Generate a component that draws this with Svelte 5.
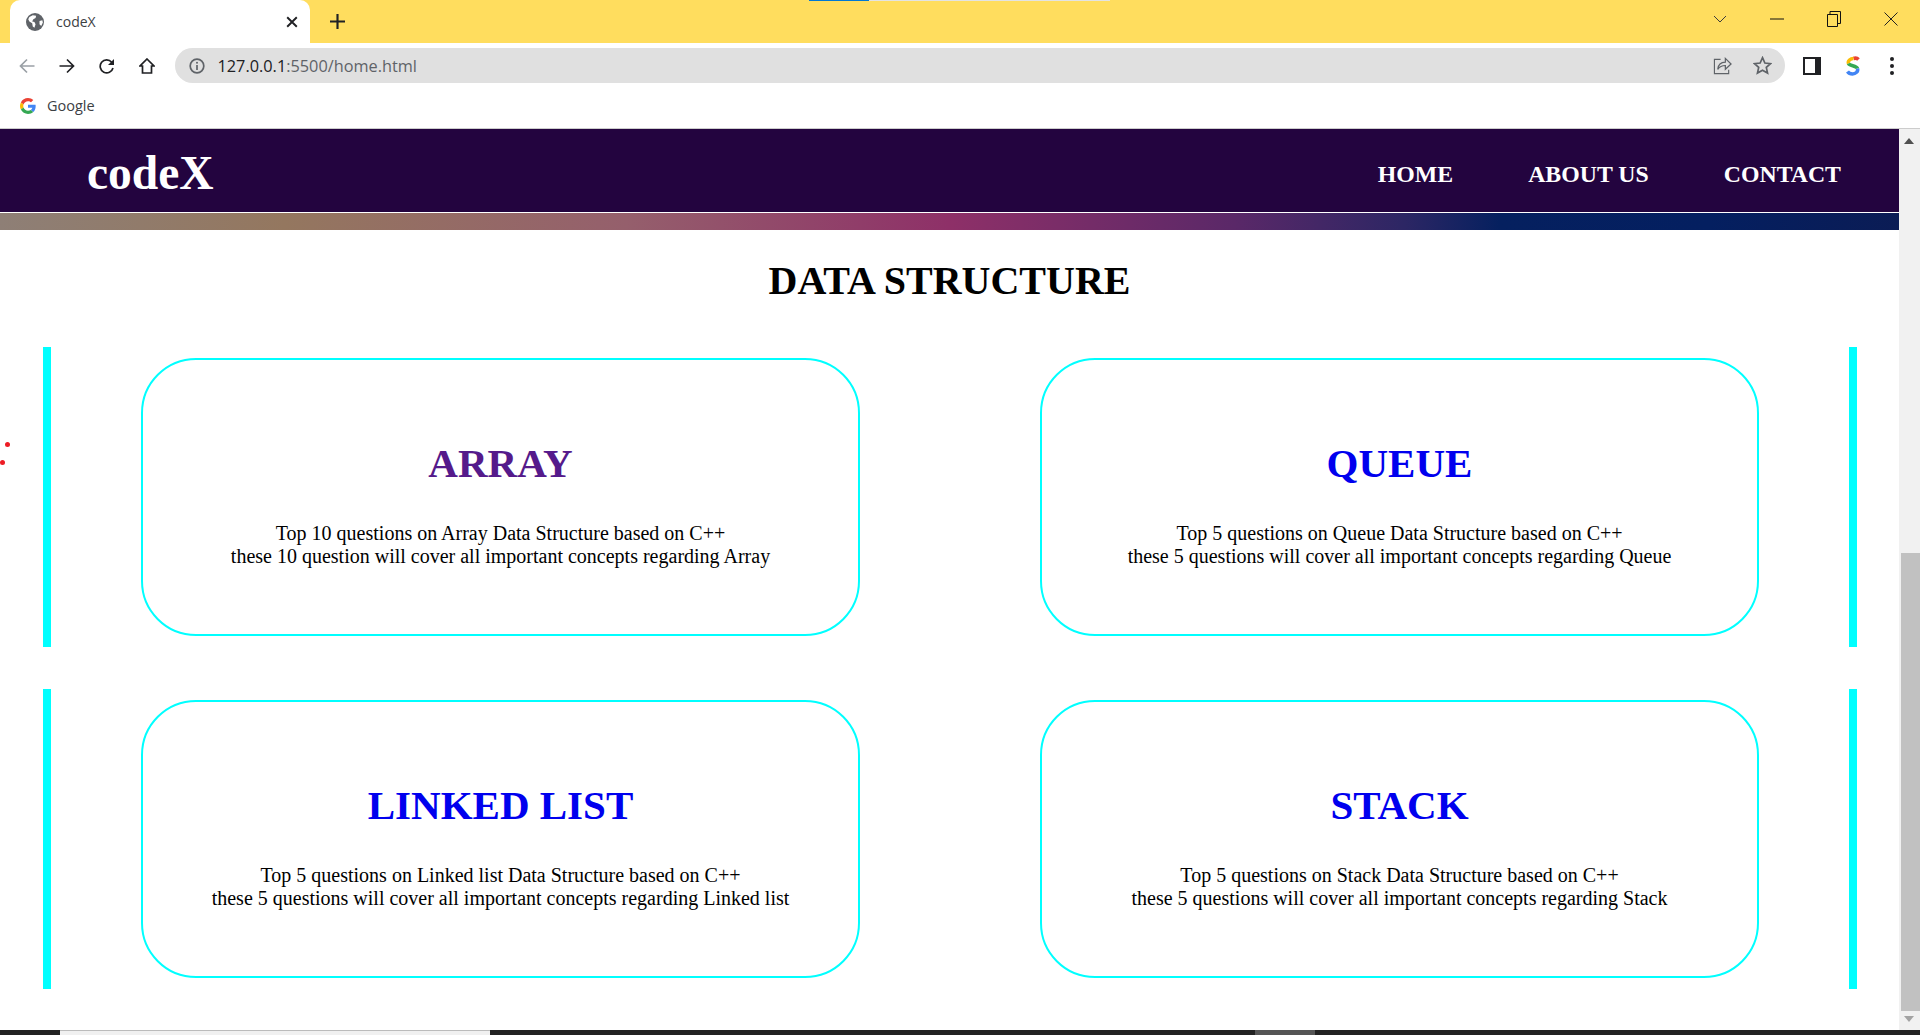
<script>
  // cards shown on the home page
  const cards = [
    { title: 'ARRAY', visited: true, line1: 'Top 10 questions on Array Data Structure based on C++', line2: 'these 10 question will cover all important concepts regarding Array' },
    { title: 'QUEUE', line1: 'Top 5 questions on Queue Data Structure based on C++', line2: 'these 5 questions will cover all important concepts regarding Queue' },
    { title: 'LINKED LIST', line1: 'Top 5 questions on Linked list Data Structure based on C++', line2: 'these 5 questions will cover all important concepts regarding Linked list' },
    { title: 'STACK', line1: 'Top 5 questions on Stack Data Structure based on C++', line2: 'these 5 questions will cover all important concepts regarding Stack' }
  ];
  const rows = [cards.slice(0, 2), cards.slice(2, 4)];
</script>

<div class="screen">
  <div class="tabstrip">
    <div class="progress"><span class="progress__done"></span><span class="progress__rest"></span></div>
    <div class="tab">
      <svg class="tab__globe" viewBox="0 0 16 16" width="18" height="18">
        <circle cx="8" cy="8" r="8" fill="#5f6368" />
        <path d="M3 3.500l3 -1.500 3 .5 -.5 2 -2 1 -1 2 2 .5 1 2 -1 3 -1.500 -1 -.5 -3 -2.500 -1.500 -1 -2z M12 7l2.500 -.5 .5 2 -1.500 3 -1.500 -1.500z" fill="#fff" />
      </svg>
      <span class="tab__title">codeX</span>
      <svg class="tab__close" viewBox="0 0 10 10" width="12" height="12">
        <path d="M1 1l8 8M9 1l-8 8" stroke="#202124" stroke-width="1.600" fill="none" />
      </svg>
    </div>
    <svg class="newtab" viewBox="0 0 14 14" width="15" height="15">
      <path d="M7 0v14M0 7h14" stroke="#202124" stroke-width="2" fill="none" />
    </svg>
    <div class="wincontrols">
      <svg viewBox="0 0 14 8" width="14" height="8"><path d="M1 1l6 6 6 -6" stroke="#3c3c3c" fill="none" /></svg>
      <svg viewBox="0 0 14 2" width="14" height="2"><path d="M0 1h14" stroke="#111" fill="none" /></svg>
      <svg viewBox="0 0 14 16" width="14" height="16"><path d="M.5 3.500h10v12h-10zM3 3.500v-3h10.500v12h-3" stroke="#111" fill="none" /></svg>
      <svg viewBox="0 0 14 14" width="14" height="14"><path d="M.5 .5l13 13M13.500 .5l-13 13" stroke="#222" fill="none" /></svg>
    </div>
  </div>

  <div class="toolbar">
    <svg class="nav-icon" viewBox="0 0 16 16" width="16" height="16"><path d="M15.500 8h-14M8 1.500l-6.500 6.500 6.500 6.500" stroke="#9aa0a6" stroke-width="1.700" fill="none" /></svg>
    <svg class="nav-icon" viewBox="0 0 16 16" width="16" height="16"><path d="M.5 8h14M8 1.500l6.500 6.500 -6.500 6.500" stroke="#202124" stroke-width="1.700" fill="none" /></svg>
    <svg class="nav-icon" viewBox="0 0 16 16" width="16" height="16"><path d="M14 10a6.500 6.500 0 1 1 -1.300 -5.800" stroke="#202124" stroke-width="1.700" fill="none" /><path d="M15 1v6h-6z" fill="#202124" /></svg>
    <svg class="nav-icon" viewBox="0 0 16 16" width="16" height="16"><path d="M8 1l7 7h-2.500v7h-9v-7h-2.500z" stroke="#202124" stroke-width="1.700" fill="none" /></svg>
    <div class="omnibox">
      <svg viewBox="0 0 16 16" width="16" height="16">
        <circle cx="8" cy="8" r="6.800" stroke="#5f6368" stroke-width="1.700" fill="none" />
        <path d="M8 7v5" stroke="#5f6368" stroke-width="1.700" /><circle cx="8" cy="4.800" r="1" fill="#5f6368" />
      </svg>
      <span class="omnibox__url"><span class="omnibox__host">127.0.0.1</span>:5500/home.html</span>
      <svg class="omnibox__share" viewBox="0 0 20 20" width="19" height="19">
        <path d="M8 3.500h-6.500v15h15v-4" stroke="#5f6368" stroke-width="1.200" fill="none" />
        <path d="M5 14c.5 -5 4 -7.500 8 -7.500v-4l6 6 -6 5.500v-4c-3 0 -6 1 -8 4z" stroke="#5f6368" stroke-width="1.300" fill="none" />
      </svg>
      <svg class="omnibox__star" viewBox="0 0 20 20" width="19" height="19">
        <path d="M10 1.800l2.500 5.600 6 .6 -4.500 4 1.300 6 -5.300 -3.100 -5.300 3.100 1.300 -6 -4.500 -4 6 -.6z" stroke="#5f6368" stroke-width="1.800" fill="none" />
      </svg>
    </div>
    <svg class="side-icon" viewBox="0 0 18 18" width="18" height="18">
      <rect width="18" height="18" fill="#202124" /><rect x="2" y="2" width="10" height="14" fill="#fff" />
    </svg>
    <svg class="s-icon" viewBox="0 0 16 20" width="16" height="20">
      <path d="M13.500 3.500a4 3 0 0 0 -5 -1" stroke="#ea4335" stroke-width="3.500" fill="none" />
      <path d="M8.500 2.500c-3 0 -6 2.500 -5 5" stroke="#fbbc04" stroke-width="3.500" fill="none" />
      <path d="M3.500 7.500c1 2.500 8 2 9 5" stroke="#34a853" stroke-width="3.500" fill="none" />
      <path d="M12.500 12.500c1 3 -2 5.500 -5 5.500 -2 0 -4 -1 -5 -2.500" stroke="#4285f4" stroke-width="3.500" fill="none" />
    </svg>
    <svg class="menu-icon" viewBox="0 0 4 18" width="4" height="18">
      <circle cx="2" cy="2" r="2" fill="#202124" /><circle cx="2" cy="9" r="2" fill="#202124" /><circle cx="2" cy="16" r="2" fill="#202124" />
    </svg>
  </div>

  <div class="bookmarks">
    <svg viewBox="0 0 48 48" width="16" height="16">
      <path fill="#ea4335" d="M24 9.500c3.900 0 6.900 1.600 9.100 3.600l6.800 -6.800C35.900 2.500 30.500 0 24 0 14.600 0 6.500 5.400 2.600 13.200l7.900 6.100C12.400 13.700 17.700 9.500 24 9.500z" />
      <path fill="#4285f4" d="M47 24.500c0 -1.600 -.1 -3.100 -.4 -4.500H24v9h13c-.6 3 -2.300 5.500 -4.800 7.200l7.700 6C44.400 38.100 47 31.900 47 24.500z" />
      <path fill="#fbbc05" d="M10.500 28.700C10 27.200 9.800 25.600 9.800 24s.2 -3.200 .7 -4.700l-7.900 -6.100C.9 16.400 0 20.100 0 24s.9 7.600 2.600 10.800z" />
      <path fill="#34a853" d="M24 48c6.500 0 11.900 -2.100 15.900 -5.800l-7.700 -6c-2.200 1.500 -4.900 2.300 -8.200 2.300 -6.300 0 -11.600 -4.200 -13.500 -9.800l-7.900 6.100C6.500 42.600 14.600 48 24 48z" />
    </svg>
    <span>Google</span>
  </div>

  <div class="viewport">
    <div class="page">
      <header class="topbar">
        <span class="logo">codeX</span>
        <nav class="topbar__nav">
          <span>HOME</span>
          <span>ABOUT US</span>
          <span>CONTACT</span>
        </nav>
      </header>
      <div class="strip"></div>

      <h1 class="heading">DATA STRUCTURE</h1>

      <main class="rows">
        {#each rows as row}
          <section class="row">
            {#each row as card}
              <article class="card">
                <h2 class="card__title" class:visited={card.visited}>{card.title}</h2>
                <p class="card__copy">{card.line1}<br />{card.line2}</p>
              </article>
            {/each}
          </section>
        {/each}
      </main>

      <span class="dot dot--one"></span>
      <span class="dot dot--two"></span>
    </div>

    <div class="scrollbar">
      <span class="scrollbar__up"></span>
      <span class="scrollbar__thumb"></span>
      <span class="scrollbar__down"></span>
    </div>
  </div>

  <div class="taskbar">
    <span class="taskbar__window"></span>
    <span class="taskbar__active"></span>
  </div>
</div>

<style>
  :global(body) {
    margin: 0;
    background: #fff;
    overflow: hidden;
  }

  .screen {
    display: flex;
    flex-direction: column;
    height: 1035px;
    overflow: hidden;
  }

  .tabstrip {
    align-items: flex-end;
    background: #ffdd5e;
    display: flex;
    flex: none;
    height: 43px;
    position: relative;
  }

  .progress {
    display: flex;
    left: 809px;
    position: absolute;
    top: 0;
  }

  .progress__done {
    background: #0078d4;
    height: 1px;
    width: 60px;
  }

  .progress__rest {
    background: #e3e3e3;
    height: 1px;
    width: 241px;
  }

  .tab {
    align-items: center;
    background: #fff;
    border-radius: 10px 10px 0 0;
    box-sizing: border-box;
    display: flex;
    height: 43px;
    margin-left: 10px;
    padding: 0 12px 0 16px;
    width: 300px;
  }

  .tab__title {
    color: #3c4043;
    flex: 1;
    font: 14px "Open Sans", sans-serif;
    margin-left: 12px;
  }

  .newtab {
    margin: 0 0 14px 20px;
  }

  .wincontrols {
    align-items: center;
    align-self: flex-start;
    display: flex;
    gap: 43px;
    height: 37px;
    margin-left: auto;
    padding-right: 22px;
  }

  .toolbar {
    align-items: center;
    background: #fff;
    display: flex;
    flex: none;
    gap: 24px;
    height: 45px;
    padding-left: 19px;
  }

  .omnibox {
    align-items: center;
    background: #e0e0e0;
    border-radius: 18px;
    display: flex;
    height: 35px;
    margin-left: -4.5px;
    padding: 0 13px 0 14px;
    width: 1583px;
  }

  .omnibox__url {
    color: #5f6368;
    flex: 1;
    font: 16.3px "Open Sans", sans-serif;
    margin-left: 13px;
  }

  .omnibox__host {
    color: #202124;
  }

  .omnibox__star {
    margin-left: 21px;
  }

  .side-icon {
    margin-left: -5.5px;
  }

  .s-icon {
    margin-left: 0;
  }

  .menu-icon {
    margin-left: 5px;
  }

  .bookmarks {
    align-items: center;
    background: #fff;
    border-bottom: 1px solid #ccc;
    box-sizing: border-box;
    color: #3c4043;
    display: flex;
    flex: none;
    font: 14.5px "Open Sans", sans-serif;
    gap: 11px;
    height: 41px;
    padding: 0 0 5px 20px;
  }

  .viewport {
    display: flex;
    flex: 1;
    min-height: 0;
  }

  .page {
    color: #000;
    flex: 1;
    font-family: "Liberation Serif", serif;
    min-width: 0;
    position: relative;
  }

  .topbar {
    align-items: center;
    background: #23043f;
    color: #fff;
    display: flex;
    font-weight: bold;
    height: 83px;
    justify-content: space-between;
    padding: 0 58px 0 87px;
  }

  .logo {
    font-size: 47.5px;
    padding-top: 4px;
  }

  .topbar__nav {
    display: flex;
    font-size: 23.8px;
    gap: 75px;
    padding-top: 8px;
  }

  .strip {
    background: linear-gradient(90deg, #8e7f76 0%, #94775f 15%, #955f6c 33%, #8e3068 50%, #5a2868 65%, #2c2664 74%, #05205f 79%, #041f60 90%, #0b1c55 100%);
    border-top: 1px solid #fff;
    height: 17px;
  }

  .heading {
    font-size: 40px;
    font-weight: bold;
    margin: 27px 0 43px;
    text-align: center;
  }

  .rows {
    display: flex;
    flex-direction: column;
    gap: 42px;
    padding: 0 42px 0 43px;
  }

  .row {
    align-items: center;
    border-left: 8px solid #0ff;
    border-right: 8px solid #0ff;
    display: flex;
    height: 300px;
    justify-content: space-around;
  }

  .card {
    border: 2px solid #0ff;
    border-radius: 55px;
    padding: 79px 0 66px;
    text-align: center;
    width: 715px;
  }

  .card__title {
    color: #00e;
    font-size: 41px;
    font-weight: bold;
    margin: 0 0 35px;
  }

  .card__title.visited {
    color: #551a8b;
  }

  .card__copy {
    font-size: 20px;
    margin: 0;
  }

  .dot {
    background: #ed1c24;
    border-radius: 50%;
    height: 5px;
    position: absolute;
    width: 5px;
  }

  .dot--one {
    left: 5px;
    top: 313px;
  }

  .dot--two {
    left: 0;
    top: 331px;
  }

  .scrollbar {
    background: #f1f1f1;
    display: flex;
    flex: none;
    flex-direction: column;
    position: relative;
    width: 21px;
  }

  .scrollbar__up {
    border-bottom: 6px solid #505050;
    border-left: 5px solid transparent;
    border-right: 5px solid transparent;
    left: 5px;
    position: absolute;
    top: 9px;
  }

  .scrollbar__thumb {
    background: #c1c1c1;
    height: 458px;
    margin: 424px 0 0 2px;
  }

  .scrollbar__down {
    border-left: 5px solid transparent;
    border-right: 5px solid transparent;
    border-top: 6px solid #a3a3a3;
    bottom: 8px;
    left: 5px;
    position: absolute;
  }

  .taskbar {
    background: #222;
    display: flex;
    flex: none;
    height: 5px;
  }

  .taskbar__window {
    background: #f0f0f0;
    border-top: 1px solid #bbb;
    box-sizing: border-box;
    margin-left: 60px;
    width: 430px;
  }

  .taskbar__active {
    background: #555;
    margin-left: 765px;
    width: 60px;
  }
</style>
